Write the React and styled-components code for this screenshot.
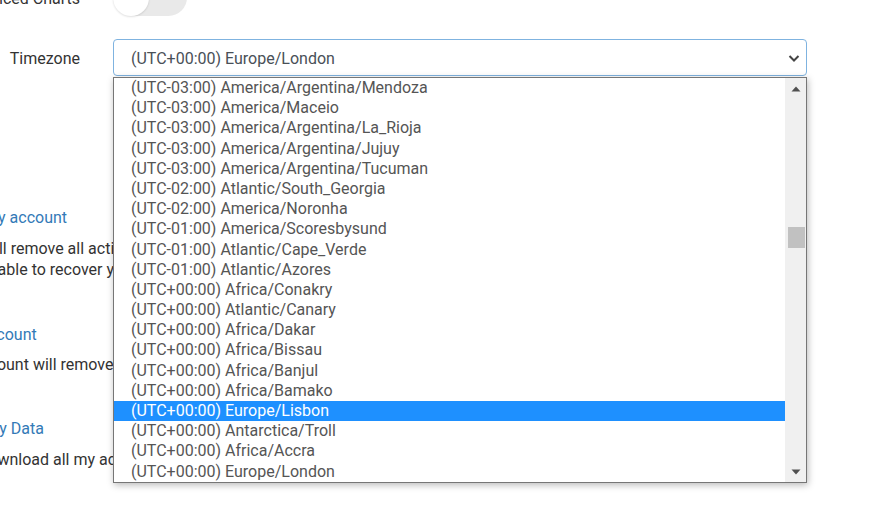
import React from 'react';
import styled, { createGlobalStyle } from 'styled-components';

const GlobalStyle = createGlobalStyle`
  html, body {
    margin: 0;
    padding: 0;
    background: #fff;
    overflow: hidden;
  }
  body {
    width: 888px;
    height: 510px;
    font-family: Roboto, "Liberation Sans", Arial, sans-serif;
    font-size: 16px;
    color: #333;
  }
`;

const Page = styled.div`
  width: 888px;
  height: 510px;
  overflow: hidden;
  position: relative;
`;

const FormRow = styled.div`
  display: flex;
  align-items: center;
  height: ${props => props.height || 38}px;
  margin-top: ${props => props.top || 0}px;
`;

const Label = styled.div`
  width: 113px;
  flex: none;
  display: flex;
  justify-content: flex-end;
  padding-right: 33px;
  padding-top: 1px;
  box-sizing: border-box;
  white-space: nowrap;
  font-size: 16px;
  color: #333;
`;

const Toggle = styled.div`
  width: 74px;
  height: 37px;
  border-radius: 19px;
  background: #e9e9e9;
  display: flex;
  align-items: center;
`;

const Knob = styled.div`
  width: 36px;
  height: 36px;
  border-radius: 50%;
  background: #fff;
  box-shadow: 0 1px 2px rgba(0, 0, 0, 0.12);
`;

const SelectWrap = styled.div`
  position: relative;
  width: 694px;
  height: 37px;
`;

const SelectBox = styled.div`
  height: 100%;
  box-sizing: border-box;
  border: 1px solid #7fb3e0;
  border-radius: 4px;
  display: flex;
  align-items: center;
  justify-content: space-between;
  padding: 1px 5px 0 17px;
  color: #495057;
  font-size: 16px;
  background: #fff;
`;

const Dropdown = styled.div`
  position: absolute;
  top: 38px;
  left: 0;
  width: 694px;
  height: 406px;
  box-sizing: border-box;
  border: 1px solid #767676;
  background: #fff;
  display: flex;
  box-shadow: 1px 2px 7px rgba(0, 0, 0, 0.28);
  z-index: 5;
`;

const Options = styled.div`
  flex: 1;
  display: flex;
  flex-direction: column;
`;

const Option = styled.div`
  height: 20.2px;
  line-height: 20.2px;
  padding-left: 17px;
  white-space: nowrap;
  font-size: 16px;
  color: ${props => (props.selected ? '#fff' : '#555')};
  background: ${props => (props.selected ? '#1e90ff' : 'transparent')};
`;

const Scrollbar = styled.div`
  width: 21px;
  flex: none;
  background: #f0f0f0;
  display: flex;
  flex-direction: column;
`;

const ArrowButton = styled.div`
  height: 21px;
  flex: none;
  display: flex;
  align-items: center;
  justify-content: center;
  padding-left: 1px;
`;

const Track = styled.div`
  flex: 1;
  display: flex;
  flex-direction: column;
  align-items: center;
  padding-left: 1px;
`;

const Thumb = styled.div`
  width: 17px;
  height: 21px;
  background: #c1c1c1;
`;

const Sections = styled.div`
  margin-left: -65px;
  margin-top: 131px;
  display: flex;
  flex-direction: column;
`;

const Section = styled.div`
  margin-bottom: ${props => props.gap || 0}px;
`;

const SectionTitle = styled.div`
  line-height: 21px;
  color: #337ab7;
  white-space: nowrap;
  margin-bottom: ${props => props.gap || 10}px;
`;

const SectionText = styled.div`
  line-height: 21px;
  color: #333;
  white-space: nowrap;
`;

const zones = [
  '(UTC-03:00) America/Argentina/Mendoza',
  '(UTC-03:00) America/Maceio',
  '(UTC-03:00) America/Argentina/La_Rioja',
  '(UTC-03:00) America/Argentina/Jujuy',
  '(UTC-03:00) America/Argentina/Tucuman',
  '(UTC-02:00) Atlantic/South_Georgia',
  '(UTC-02:00) America/Noronha',
  '(UTC-01:00) America/Scoresbysund',
  '(UTC-01:00) Atlantic/Cape_Verde',
  '(UTC-01:00) Atlantic/Azores',
  '(UTC+00:00) Africa/Conakry',
  '(UTC+00:00) Atlantic/Canary',
  '(UTC+00:00) Africa/Dakar',
  '(UTC+00:00) Africa/Bissau',
  '(UTC+00:00) Africa/Banjul',
  '(UTC+00:00) Africa/Bamako',
  '(UTC+00:00) Europe/Lisbon',
  '(UTC+00:00) Antarctica/Troll',
  '(UTC+00:00) Africa/Accra',
  '(UTC+00:00) Europe/London',
];

const highlighted = '(UTC+00:00) Europe/Lisbon';

const Chevron = () => (
  <svg width="14" height="14" viewBox="0 0 14 14">
    <path d="M2.5 5 L7 9.5 L11.5 5" fill="none" stroke="#444" strokeWidth="2" />
  </svg>
);

const Triangle = ({ down }) => (
  <svg width="10" height="6" viewBox="0 0 10 6">
    <path d={down ? 'M0.5 0.5 H9.5 L5 5.5 Z' : 'M0.5 5.5 H9.5 L5 0.5 Z'} fill="#505050" />
  </svg>
);

const App = () => {
  const thumbOffset = 128;

  return (
    <Page>
      <GlobalStyle />

      <FormRow height={37} top={-21}>
        <Label>Advanced Charts</Label>
        <Toggle>
          <Knob />
        </Toggle>
      </FormRow>

      <FormRow height={37} top={23}>
        <Label>Timezone</Label>
        <SelectWrap>
          <SelectBox>
            <span>(UTC+00:00) Europe/London</span>
            <Chevron />
          </SelectBox>
          <Dropdown>
            <Options>
              {zones.map(zone => (
                <Option key={zone} selected={zone === highlighted}>
                  {zone}
                </Option>
              ))}
            </Options>
            <Scrollbar>
              <ArrowButton>
                <Triangle />
              </ArrowButton>
              <Track>
                <Thumb style={{ marginTop: thumbOffset }} />
              </Track>
              <ArrowButton>
                <Triangle down />
              </ArrowButton>
            </Scrollbar>
          </Dropdown>
        </SelectWrap>
      </FormRow>

      <Sections>
        <Section gap={44}>
          <SectionTitle>Delete my account</SectionTitle>
          <SectionText>Which will remove all activities, and you</SectionText>
          <SectionText>won't be able to recover your data.</SectionText>
        </Section>
        <Section gap={43}>
          <SectionTitle gap={9}>Reset account</SectionTitle>
          <SectionText>Your account will remove all your settings.</SectionText>
        </Section>
        <Section>
          <SectionTitle>Export my Data</SectionTitle>
          <SectionText>Try to download all my activities.</SectionText>
        </Section>
      </Sections>
    </Page>
  );
};

export default App;
